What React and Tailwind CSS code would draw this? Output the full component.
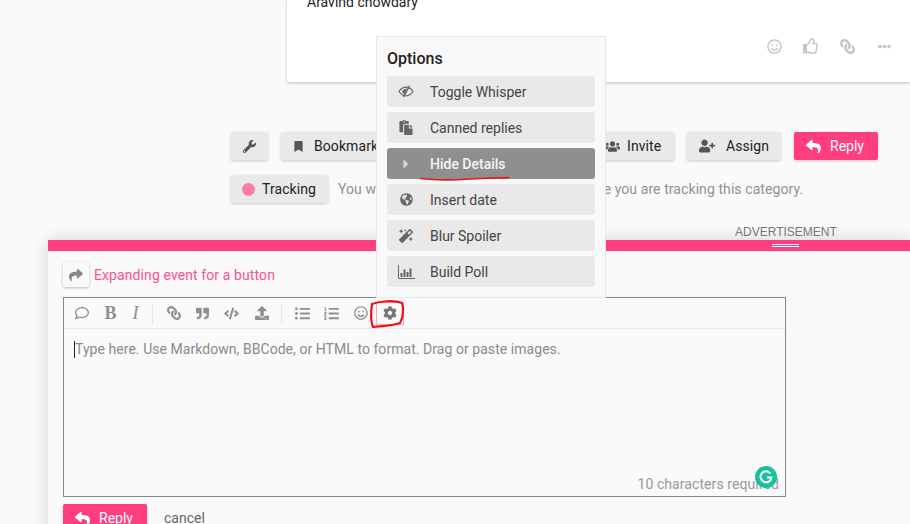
import {
  FaBookmark, FaCaretRight, FaCode, FaCog, FaEllipsisH, FaGlobeAmericas,
  FaLink, FaListOl, FaListUl, FaMagic, FaPaste, FaQuoteRight, FaRegComment, FaRegSmile, FaRegThumbsUp, FaReply,
  FaShare, FaUpload, FaUserPlus, FaUsers, FaWrench,
} from "react-icons/fa";

const GrayButton = ({ icon, children, className = "" }) => (
  <button className={`h-[28px] flex items-center rounded-[2px] bg-[#e9e9e9] text-[#222] text-sm tracking-[0.08px] shadow-[0_1px_3px_rgba(0,0,0,0.2)] ${className}`}>
    {icon}
    {children}
  </button>
);

const ReplyButton = ({ className = "" }) => (
  <button className={`h-[28px] w-[84px] pl-[12px] flex items-center rounded-[2px] bg-[#ff3d7f] text-white text-sm shadow-[0_1px_3px_rgba(0,0,0,0.2)] ${className}`}>
    <FaReply className="text-[15px] mr-[9px]" />
    Reply
  </button>
);

const Post = () => (
  <div className="ml-[287px] h-[82px] bg-white shadow-[0_1px_3px_rgba(0,0,0,0.25)] flex flex-col">
    <p className="pl-[20px] text-sm text-[#222] leading-[20px] -mt-[8px]">Aravind chowdary</p>
    <div className="flex items-center text-[#c4c4c4] mt-[24px] h-[20px] pl-[480px]">
      <FaRegSmile className="w-[15px] h-[15px]" />
      <FaRegThumbsUp className="w-[16px] h-[18px] ml-[21px]" />
      <FaLink className="w-[15px] h-[15px] ml-[21px] -scale-x-100" />
      <FaEllipsisH className="w-[13px] h-[13px] ml-[23px]" />
    </div>
  </div>
);

const TopicFooter = () => (
  <div className="pl-[231px] pt-[50px]">
    <div className="flex items-center">
      <GrayButton className="w-[37px] justify-center" icon={<FaWrench className="text-[#555] text-[13px] -scale-x-100 rotate-90" />} />
      <GrayButton className="w-[109px] pl-[12px] ml-[13px]" icon={<FaBookmark className="text-[#555] text-[11px] mr-[10px]" />}>
        Bookmark
      </GrayButton>
      <GrayButton className="w-[80px] pl-[11px] ml-[204px]" icon={<FaUsers className="text-[#555] text-[15px] mr-[7px]" />}>
        Invite
      </GrayButton>
      <GrayButton className="w-[94px] pl-[12px] ml-[13px]" icon={<FaUserPlus className="text-[#555] text-[16px] mr-[11px]" />}>
        Assign
      </GrayButton>
      <ReplyButton className="ml-[13px]" />
    </div>
    <div className="flex items-center mt-[15px]">
      <GrayButton className="w-[97px] pl-[11px]" icon={<span className="w-[13px] h-[13px] rounded-full bg-[#ff7aa6] mr-[7px]" />}>
        Tracking
      </GrayButton>
      <span className="ml-[10px] text-sm tracking-[0.08px] text-[#919191] whitespace-nowrap">
        You will see a count of new replies because you are tracking this category.
      </span>
    </div>
  </div>
);

const Sep = () => <span className="w-px h-[19px] bg-[#e4e4e4] mx-[6px]" />;

const ToolIcon = ({ children, className = "w-[29px]" }) => (
  <span className={`h-[20px] flex items-center justify-center text-[#8f8f8f] ${className}`}>{children}</span>
);

const Composer = () => (
  <div className="ml-[48px] h-[300px] mt-[37px] bg-[#fafafa] shadow-[0_0_16px_rgba(0,0,0,0.16)] relative">
    <div className="h-[11px] bg-[#ff3d7f] flex flex-col items-center justify-center gap-[1px]">
      <span className="w-[27px] h-px bg-white ml-[613px]" />
      <span className="w-[27px] h-px bg-white ml-[613px]" />
    </div>
    <span className="absolute left-[687px] -top-[15px] text-xs leading-[15px] text-[#777] font-['Liberation_Sans',sans-serif]">ADVERTISEMENT</span>
    <div className="pl-[15px]">
      <div className="flex items-center mt-[11px] h-[25px]">
        <span className="w-[26px] h-[25px] flex items-center justify-center bg-[#fafafa] shadow-[0_1px_3px_rgba(0,0,0,0.25)] rounded-[2px]">
          <FaShare className="text-[#888] text-[14px]" />
        </span>
        <span className="ml-[5px] text-sm tracking-[0.1px] text-[#ff4f8c]">Expanding event for a button</span>
      </div>
      <div className="w-[723px] h-[200px] mt-[10px] border border-[#888] flex flex-col">
        <div className="h-[31px] border-b border-[#e9e9e9] flex items-center pl-[3px] shrink-0">
          <ToolIcon><FaRegComment className="w-[16px] h-[14px]" /></ToolIcon>
          <ToolIcon><span className="font-['Liberation_Serif',serif] font-bold text-[18px] leading-none">B</span></ToolIcon>
          <ToolIcon className="w-[21px]"><span className="font-['Liberation_Serif',serif] italic text-[18px] leading-none">I</span></ToolIcon>
          <Sep />
          <ToolIcon><FaLink className="w-[14px] h-[14px] -scale-x-100" /></ToolIcon>
          <ToolIcon><FaQuoteRight className="w-[13px] h-[13px]" /></ToolIcon>
          <ToolIcon><FaCode className="w-[15px] h-[15px]" /></ToolIcon>
          <ToolIcon><FaUpload className="w-[14px] h-[14px] translate-x-[1px]" /></ToolIcon>
          <Sep />
          <ToolIcon><FaListUl className="w-[15px] h-[15px]" /></ToolIcon>
          <ToolIcon><FaListOl className="w-[15px] h-[15px]" /></ToolIcon>
          <ToolIcon><FaRegSmile className="w-[14px] h-[14px]" /></ToolIcon>
          <ToolIcon><FaCog className="w-[14px] h-[14px] text-[#777]" /></ToolIcon>
        </div>
        <div className="flex-1 flex flex-col justify-between pl-[10px] pr-[6px] pt-[12px] pb-[3px]">
          <div className="flex items-center text-sm tracking-[0.05px] text-[#8a8a8a] leading-[17px]">
            <span className="w-px h-[17px] bg-[#222]" />
            Type here. Use Markdown, BBCode, or HTML to format. Drag or paste images.
          </div>
          <div className="text-sm tracking-[0.08px] text-[#999] text-right leading-[17px]">10 characters required</div>
        </div>
      </div>
      <div className="flex items-center mt-[7px]">
        <ReplyButton />
        <span className="ml-[17px] text-sm text-[#666]">cancel</span>
      </div>
    </div>
  </div>
);

const WhisperIcon = () => (
  <svg width="16" height="13" viewBox="0 0 16 13" fill="none">
    <path d="M1 6.5C3 3.5 5.5 2.2 8 2.2S13 3.5 15 6.5C13 9.5 10.5 10.8 8 10.8S3 9.5 1 6.5Z" stroke="currentColor" strokeWidth="1.2" />
    <path d="M4 6.5C5 4.5 7 3.5 9 3.5L6.5 9.5C5.5 9 4.6 7.8 4 6.5Z" fill="currentColor" />
    <path d="M11.5 0.8L5.5 12" stroke="currentColor" strokeWidth="1.4" />
  </svg>
);

const PollIcon = () => (
  <svg width="17" height="14" viewBox="0 0 17 14" fill="none" stroke="currentColor">
    <path d="M0.5 0V13.5H17" />
    <path d="M3.5 12V8M6.5 12V4.5M9.5 12V7M12.5 12V3.5" strokeWidth="2" />
  </svg>
);

const OPTIONS = [
  { label: "Toggle Whisper", icon: <WhisperIcon /> },
  { label: "Canned replies", icon: <FaPaste className="w-[14px] h-[15px]" /> },
  { label: "Hide Details", icon: <FaCaretRight className="w-[12px] h-[14px]" />, active: true },
  { label: "Insert date", icon: <FaGlobeAmericas className="w-[13px] h-[13px]" /> },
  { label: "Blur Spoiler", icon: <FaMagic className="w-[14px] h-[14px]" /> },
  { label: "Build Poll", icon: <PollIcon /> },
];

const OptionsMenu = () => (
  <div className="absolute left-[376px] top-[36px] w-[230px] h-[262px] bg-[#f9f9f9] border border-[#e8e8e8] px-[10px]">
    <h3 className="text-base font-medium text-[#222] leading-[19px] mt-[12px] mb-[8px]">Options</h3>
    <ul className="flex flex-col gap-[5px]">
      {OPTIONS.map((o) => (
        <li
          key={o.label}
          className={`h-[31px] w-[208px] rounded-[3px] flex items-center text-sm ${o.active ? "bg-[#8f8f8f] text-[#f5f5f5] font-medium" : "bg-[#e9e9e9] text-[#444]"}`}
        >
          <span className={`w-[43px] flex justify-center pr-[5px] ${o.active ? "text-[#d5d5d5]" : "text-[#666]"}`}>{o.icon}</span>
          {o.label}
        </li>
      ))}
    </ul>
  </div>
);

const Grammarly = () => (
  <span className="absolute left-[755px] top-[466px] w-[22px] h-[22px] rounded-full bg-[#15c39a] flex items-center justify-center">
    <svg width="14" height="14" viewBox="0 0 14 14" fill="none" stroke="white" strokeWidth="2">
      <path d="M11.5 3.5A5.5 5.5 0 1 0 12.5 7.5H8" />
    </svg>
  </span>
);

// the red marker strokes drawn on the screenshot
const Scribbles = () => (
  <svg className="absolute left-0 top-0 pointer-events-none" width="910" height="524" fill="none" stroke="#f01010" strokeWidth="1.6" strokeLinecap="round">
    <rect x="376.5" y="302.5" width="27" height="22" stroke="#ffa6c6" strokeWidth="1" />
    <path d="M421 178.5C440 181 455 180 470 179C485 178 500 178 509 177.5" />
    <path d="M372 304C380 301 394 300 402 303C404 309 403 318 400 323C392 326 382 326 373 327C370 320 371 311 372 304Z" strokeWidth="2.2" />
  </svg>
);

export default function App() {
  return (
    <div className="w-[910px] h-[524px] relative overflow-hidden bg-[#fafafa] font-['Roboto',sans-serif]">
      <Post />
      <TopicFooter />
      <Composer />
      <OptionsMenu />
      <Grammarly />
      <Scribbles />
    </div>
  );
}
